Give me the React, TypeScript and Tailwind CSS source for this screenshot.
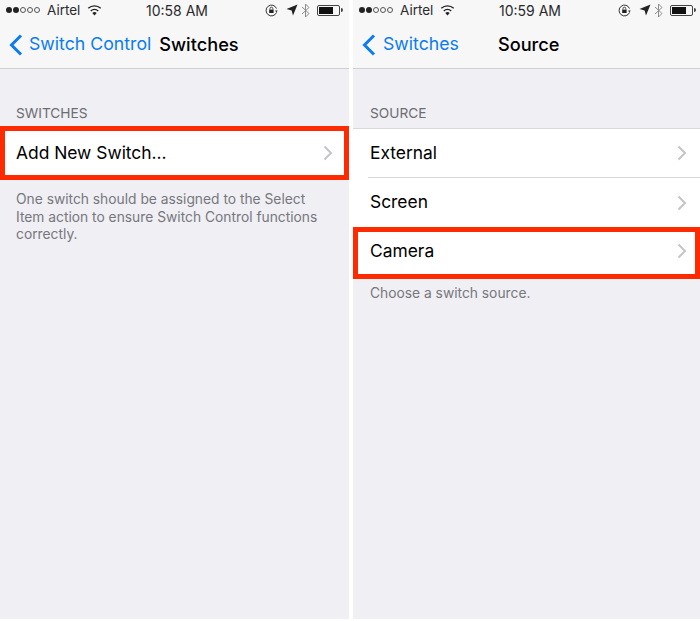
const font = "font-['Inter','Liberation_Sans',sans-serif]";

const Chevron = () => (
  <svg width="10" height="16" viewBox="0 0 10 16" fill="none" className="shrink-0">
    <path d="M1.5 1.5L8 8L1.5 14.5" stroke="#c4c4c9" strokeWidth="2" />
  </svg>
);

const BackChevron = () => (
  <svg width="14" height="22" viewBox="0 0 14 22" fill="none" className="shrink-0">
    <path d="M12 1.5L2.5 11L12 20.5" stroke="#0a7cf2" strokeWidth="3" />
  </svg>
);

const Wifi = () => (
  <svg width="15" height="11" viewBox="0 0 16 12" className="shrink-0">
    <path d="M8 11.5L5.6 8.6A3.6 3.6 0 0 1 10.4 8.6Z" fill="#222" />
    <path d="M3.9 6.5A6.2 6.2 0 0 1 12.1 6.5" stroke="#222" strokeWidth="1.5" fill="none" />
    <path d="M1.2 3.6A10 10 0 0 1 14.8 3.6" stroke="#222" strokeWidth="1.5" fill="none" />
  </svg>
);

const StatusIcons = () => (
  <div className="flex items-center">
    {/* rotation lock */}
    <svg width="13" height="13" viewBox="0 0 13 13" fill="none">
      <path d="M11.5 8.5A5.4 5.4 0 1 1 11.5 4.5" stroke="#333" strokeWidth="1" />
      <path d="M10 6.5L12.8 6.5L11.4 8.4Z" fill="#333" />
      <rect x="4.2" y="5.6" width="4.4" height="3.4" fill="#222" />
      <path d="M5 5.6V4.6A1.4 1.4 0 0 1 7.8 4.6V5.6" stroke="#222" strokeWidth="0.8" />
    </svg>
    {/* location */}
    <svg width="12" height="12" viewBox="0 0 12 12" className="ml-[8px]">
      <path d="M11.5 0.5L7 11.5L5.6 6.4L0.5 5Z" fill="#222" />
    </svg>
    {/* bluetooth */}
    <svg width="9" height="15" viewBox="0 0 9 15" fill="none" className="ml-[3px]">
      <path d="M1 4L8 10.5L4.5 14V1L8 4.5L1 11" stroke="#8d8d90" strokeWidth="1" />
    </svg>
    {/* battery */}
    <div className="ml-[7px] flex items-center">
      <div className="h-[11px] w-[23px] rounded-[2px] border border-[#444] p-[1px]">
        <div className="h-full w-[14px] bg-[#111]" />
      </div>
      <div className="ml-[1px] h-[4px] w-[1.5px] rounded-r-sm bg-[#444]" />
    </div>
  </div>
);

const StatusBar = ({ time }: { time: string }) => (
  <div className="flex h-[20px] items-center text-[14px] text-[#2a2a2c]">
    <div className="flex w-[146px] items-center pl-[6px]">
      <div className="flex gap-[1px]">
        {[0, 1].map((i) => (
          <span key={i} className="size-[6px] rounded-full bg-[#222]" />
        ))}
        {[2, 3, 4].map((i) => (
          <span key={i} className="size-[6px] rounded-full border-[0.75px] border-[#555]" />
        ))}
      </div>
      <span className="ml-[7px] text-[13.5px]">Airtel</span>
      <span className="ml-[7px]">
        <Wifi />
      </span>
    </div>
    <span className="w-[119px]">{time}</span>
    <StatusIcons />
  </div>
);

const Row = ({ label, divider }: { label: string; divider?: boolean }) => (
  <div className="bg-white pl-[15px]">
    <div
      className={`flex h-[49px] items-center pl-[2px] pr-[13px] text-[17.4px] text-black ${
        divider ? "border-b border-[#d9d9dc]" : ""
      }`}
    >
      <span className="flex-1">{label}</span>
      <Chevron />
    </div>
  </div>
);

const App = () => {
  return (
    <div className={`flex h-[621px] w-[700px] gap-[4px] bg-white ${font}`}>
      {/* left phone */}
      <div className="flex h-[619px] w-[349px] flex-col bg-[#efeff4]">
        <div className="h-[69px] border-b border-[#d0d0d4] bg-[#f7f7f8]">
          <StatusBar time="10:58 AM" />
          <div className="flex h-[48px] items-center pl-[9px] pt-[1px] text-[17.7px]">
            <BackChevron />
            <span className="ml-[6px] text-[#0a7cf2]">Switch Control</span>
            <span className="ml-[8px] text-[18.2px] font-medium text-black">Switches</span>
          </div>
        </div>
        <div className="pl-[16px] pt-[36px] text-[13.7px] leading-[16px] text-[#6d6d72]">SWITCHES</div>
        <div className="mt-[5px] flex h-[54px] items-center border-[5px] border-[#ff2a00] bg-white px-[11px] text-[17.4px] text-black">
          <span className="flex-1">Add New Switch...</span>
          <Chevron />
        </div>
        <p className="pl-[16px] pr-[20px] pt-[11px] text-[13.8px] leading-[17.5px] text-[#77777c]">
          One switch should be assigned to the Select Item action to ensure Switch Control functions correctly.
        </p>
      </div>

      {/* right phone */}
      <div className="flex h-[619px] w-[347px] flex-col bg-[#efeff4]">
        <div className="h-[69px] border-b border-[#d0d0d4] bg-[#f7f7f8]">
          <StatusBar time="10:59 AM" />
          <div className="flex h-[48px] items-center pl-[9px] pt-[1px] text-[17.7px]">
            <BackChevron />
            <span className="ml-[7px] text-[#0a7cf2]">Switches</span>
            <span className="ml-[39px] text-[18.2px] font-medium text-black">Source</span>
          </div>
        </div>
        <div className="pl-[17px] pt-[36px] text-[13.7px] leading-[16px] text-[#6d6d72]">SOURCE</div>
        <div className="mt-[7px] border-t border-[#d9d9dc]">
          <Row label="External" divider />
          <Row label="Screen" />
        </div>
        <div className="flex h-[52px] items-center border-[5px] border-[#ff2a00] bg-white pb-[4px] pl-[12px] pr-[8px] text-[17.4px] text-black">
          <span className="flex-1">Camera</span>
          <Chevron />
        </div>
        <p className="px-[17px] pt-[6px] text-[13.8px] leading-[17.5px] text-[#77777c]">Choose a switch source.</p>
      </div>
    </div>
  );
};

export default App;
